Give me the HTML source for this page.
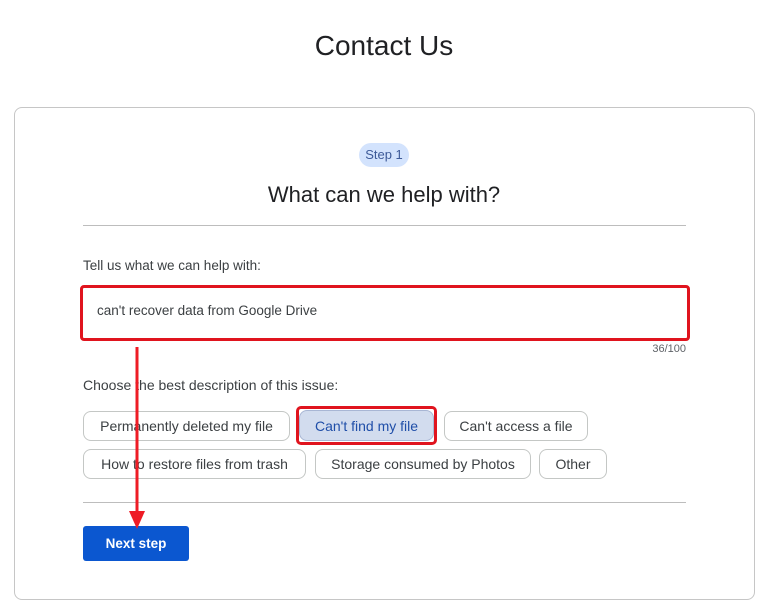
<!DOCTYPE html>
<html><head><style>
body{margin:0;width:768px;height:608px;background:#fff;font-family:"Liberation Sans",sans-serif;position:relative;overflow:hidden;color:#202124}
.a{position:absolute}
.chip{position:absolute;border:1px solid #c4c7c5;border-radius:8px;box-sizing:border-box;font-size:14px;color:#3c4043;display:flex;align-items:center;justify-content:center;height:30px;white-space:nowrap}
</style></head><body>
<div class="a" style="left:0;width:768px;top:30px;text-align:center;font-size:28px;color:#202124">Contact Us</div>
<div class="a" style="left:14px;top:107px;width:741px;height:493px;border:1px solid #c6c6c6;border-radius:8px;box-sizing:border-box"></div>
<div class="a" style="left:359px;top:143px;width:50px;height:24px;border-radius:12px;background:#d3e3fd;color:#3d5a98;font-size:13px;line-height:24px;text-align:center">Step 1</div>
<div class="a" style="left:0;width:768px;top:182px;text-align:center;font-size:22px">What can we help with?</div>
<div class="a" style="left:83px;top:225px;width:603px;height:1px;background:#bdbdbd"></div>
<div class="a" style="left:83px;top:258px;font-size:13.5px;color:#3c4043">Tell us what we can help with:</div>
<div class="a" style="left:80px;top:285px;width:610px;height:56px;border:3px solid #e0141e;border-radius:4px;box-sizing:border-box"></div>
<div class="a" style="left:97px;top:303px;font-size:13.5px;color:#3c4043">can't recover data from Google Drive</div>
<div class="a" style="left:640px;top:343px;width:46px;text-align:right;font-size:11px;color:#5f6368">36/100</div>
<div class="a" style="left:83px;top:377px;font-size:14px;color:#3c4043">Choose the best description of this issue:</div>
<div class="chip" style="left:83px;top:411px;width:207px">Permanently deleted my file</div>
<div class="a" style="left:296px;top:406px;width:141px;height:39px;border:3px solid #e0141e;border-radius:5px;box-sizing:border-box"></div>
<div class="chip" style="left:299px;top:410px;width:135px;height:31px;background:#d2dcee;border-color:#a8b6d4;color:#1f4ea8">Can't find my file</div>
<div class="chip" style="left:444px;top:411px;width:144px">Can't access a file</div>
<div class="chip" style="left:83px;top:449px;width:223px">How to restore files from trash</div>
<div class="chip" style="left:315px;top:449px;width:216px">Storage consumed by Photos</div>
<div class="chip" style="left:539px;top:449px;width:68px">Other</div>
<div class="a" style="left:83px;top:502px;width:603px;height:1px;background:#bdbdbd"></div>
<div class="a" style="left:83px;top:526px;width:106px;height:35px;background:#0b57d0;border-radius:3px;color:#fff;font-size:13.5px;font-weight:bold;line-height:35px;text-align:center">Next step</div>
<svg class="a" style="left:0;top:0" width="768" height="608"><line x1="137" y1="347" x2="137" y2="515" stroke="#ee1c25" stroke-width="3"/><polygon points="129,511 145,511 137,529" fill="#ee1c25"/></svg>
</body></html>
